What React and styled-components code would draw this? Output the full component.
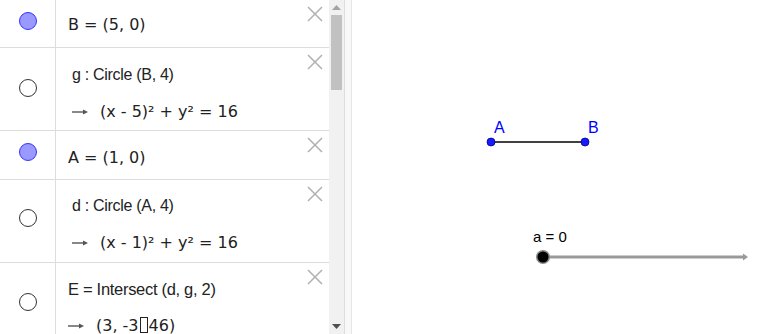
import React from 'react';
import styled, { createGlobalStyle } from 'styled-components';

const GlobalStyle = createGlobalStyle`
  html, body {
    margin: 0;
    padding: 0;
    background: #fff;
    overflow: hidden;
  }
  body {
    font-family: "DejaVu Sans", sans-serif;
  }
`;

const Page = styled.div`
  display: flex;
  width: 780px;
  height: 334px;
  overflow: hidden;
`;

const AlgebraView = styled.div`
  display: flex;
  width: 344px;
  flex-shrink: 0;
  height: 100%;
`;

const List = styled.div`
  width: 329px;
  height: 100%;
  overflow: hidden;
`;

const Row = styled.div`
  display: flex;
  height: ${p => p.$h}px;
  border-bottom: 1px solid #dcdcdc;
  box-sizing: border-box;
`;

const MarbleCell = styled.div`
  width: 56px;
  flex-shrink: 0;
  border-right: 1px solid #dcdcdc;
  box-sizing: border-box;
  display: flex;
  justify-content: center;
  padding-top: ${p => p.$top}px;
`;

const Marble = styled.div`
  width: 18px;
  height: 18px;
  border-radius: 50%;
  box-sizing: border-box;
  border: 1px solid ${p => (p.$on ? '#3333ff' : '#333')};
  background: ${p => (p.$on ? '#9999ff' : '#fff')};
`;

const Body = styled.div`
  flex: 1;
  position: relative;
  padding: ${p => p.$top}px 0 0 ${p => p.$left}px;
`;

const Definition = styled.div`
  font-family: "Liberation Sans", sans-serif;
  font-size: ${p => p.$size}px;
  color: #222;
  height: 22px;
  line-height: 22px;
  letter-spacing: -0.3px;
`;

const Value = styled.div`
  font-size: 16px;
  color: #222;
  height: 22px;
  line-height: 22px;
  white-space: pre;
`;

const Output = styled.div`
  display: flex;
  align-items: center;
  gap: 12px;
  margin-top: 15px;
  font-size: 16px;
  color: #222;
  height: 22px;
  line-height: 22px;
  white-space: pre;
`;

const Tofu = styled.span`
  display: inline-block;
  width: 6px;
  height: 14px;
  border: 1px solid #222;
  vertical-align: -2px;
  margin: 0 1px;
`;

const Close = styled.div`
  position: absolute;
  top: 6px;
  right: 6px;
  width: 16px;
  height: 16px;
`;

const Scrollbar = styled.div`
  width: 15px;
  height: 100%;
  background: #f1f1f1;
  position: relative;
  display: flex;
  flex-direction: column;
  align-items: center;
`;

const ScrollArrow = styled.div`
  height: 15px;
  display: flex;
  align-items: center;
  justify-content: center;
`;

const Thumb = styled.div`
  width: 11px;
  height: 75px;
  background: #c1c1c1;
`;

const Spacer = styled.div`
  flex: 1;
`;

const Splitter = styled.div`
  width: 6px;
  flex-shrink: 0;
  background: #f8f8f8;
  border-left: 1px solid #dddddd;
  border-right: 1px solid #e6e6e6;
`;

const Graphics = styled.div`
  flex: 1;
  height: 100%;
  background: #fff;
`;

function CloseIcon() {
  return (
    <Close>
      <svg width="16" height="16" viewBox="0 0 16 16">
        <path d="M1 1L15 15M15 1L1 15" stroke="#b0b0b0" strokeWidth="1.5" />
      </svg>
    </Close>
  );
}

function Arrow() {
  return (
    <svg width="16" height="8" viewBox="0 0 16 8">
      <path d="M0 4H13" stroke="#555" strokeWidth="1.4" />
      <path d="M11 1.5L16 4L11 6.5Z" fill="#555" />
    </svg>
  );
}

const rows = [
  { h: 48, on: true, marble: 12, top: 14, left: 12, value: 'B = (5, 0)' },
  {
    h: 83, on: false, marble: 31, top: 16, left: 16, size: 16,
    def: 'g : Circle (B, 4)', out: '(x - 5)² + y² = 16',
  },
  { h: 49, on: true, marble: 12, top: 16, left: 12, value: 'A = (1, 0)' },
  {
    h: 83, on: false, marble: 29, top: 15, left: 16, size: 16,
    def: 'd : Circle (A, 4)', out: '(x - 1)² + y² = 16',
  },
  {
    h: 90, on: false, marble: 30, top: 15, left: 12, size: 16.5,
    def: 'E = Intersect (d, g, 2)', tofu: true,
  },
];

function AlgebraRow({ row }) {
  return (
    <Row $h={row.h}>
      <MarbleCell $top={row.marble}>
        <Marble $on={row.on} />
      </MarbleCell>
      <Body $top={row.top} $left={row.left}>
        {row.value && <Value>{row.value}</Value>}
        {row.def && <Definition $size={row.size}>{row.def}</Definition>}
        {row.out && (
          <Output>
            <Arrow />
            <span>{row.out}</span>
          </Output>
        )}
        {row.tofu && (
          <Output>
            <Arrow />
            <span>
              (3, -3<Tofu />46)
            </span>
          </Output>
        )}
        <CloseIcon />
      </Body>
    </Row>
  );
}

function Drawing() {
  return (
    <svg width="428" height="334" viewBox="352 0 428 334">
      <line x1="491" y1="142" x2="585" y2="142" stroke="#000" strokeWidth="1.4" />
      <circle cx="491" cy="142" r="4" fill="#1a1aff" stroke="#00008a" strokeWidth="0.8" />
      <circle cx="585" cy="142" r="4" fill="#1a1aff" stroke="#00008a" strokeWidth="0.8" />
      <text x="494" y="133" fill="#0000ff" fontFamily="Liberation Sans, sans-serif" fontSize="16">A</text>
      <text x="588" y="133" fill="#0000ff" fontFamily="Liberation Sans, sans-serif" fontSize="16">B</text>
      <text x="533" y="242" fill="#000" fontFamily="Liberation Sans, sans-serif" fontSize="15">a = 0</text>
      <line x1="543" y1="257" x2="744" y2="257" stroke="#999" strokeWidth="3" />
      <path d="M743 253.5L748 257L743 260.5Z" fill="#999" />
      <circle cx="543" cy="257" r="7" fill="#888" />
      <circle cx="543" cy="257" r="5.5" fill="#000" />
    </svg>
  );
}

export default function App() {
  return (
    <>
      <GlobalStyle />
      <Page>
        <AlgebraView>
          <List>
            {rows.map((row, i) => (
              <AlgebraRow key={i} row={row} />
            ))}
          </List>
          <Scrollbar>
            <ScrollArrow>
              <svg width="9" height="5" viewBox="0 0 9 5">
                <path d="M0 5L4.5 0L9 5Z" fill="#a3a3a3" />
              </svg>
            </ScrollArrow>
            <Thumb />
            <Spacer />
            <ScrollArrow>
              <svg width="9" height="5" viewBox="0 0 9 5">
                <path d="M0 0L4.5 5L9 0Z" fill="#505050" />
              </svg>
            </ScrollArrow>
          </Scrollbar>
        </AlgebraView>
        <Splitter />
        <Graphics>
          <Drawing />
        </Graphics>
      </Page>
    </>
  );
}
